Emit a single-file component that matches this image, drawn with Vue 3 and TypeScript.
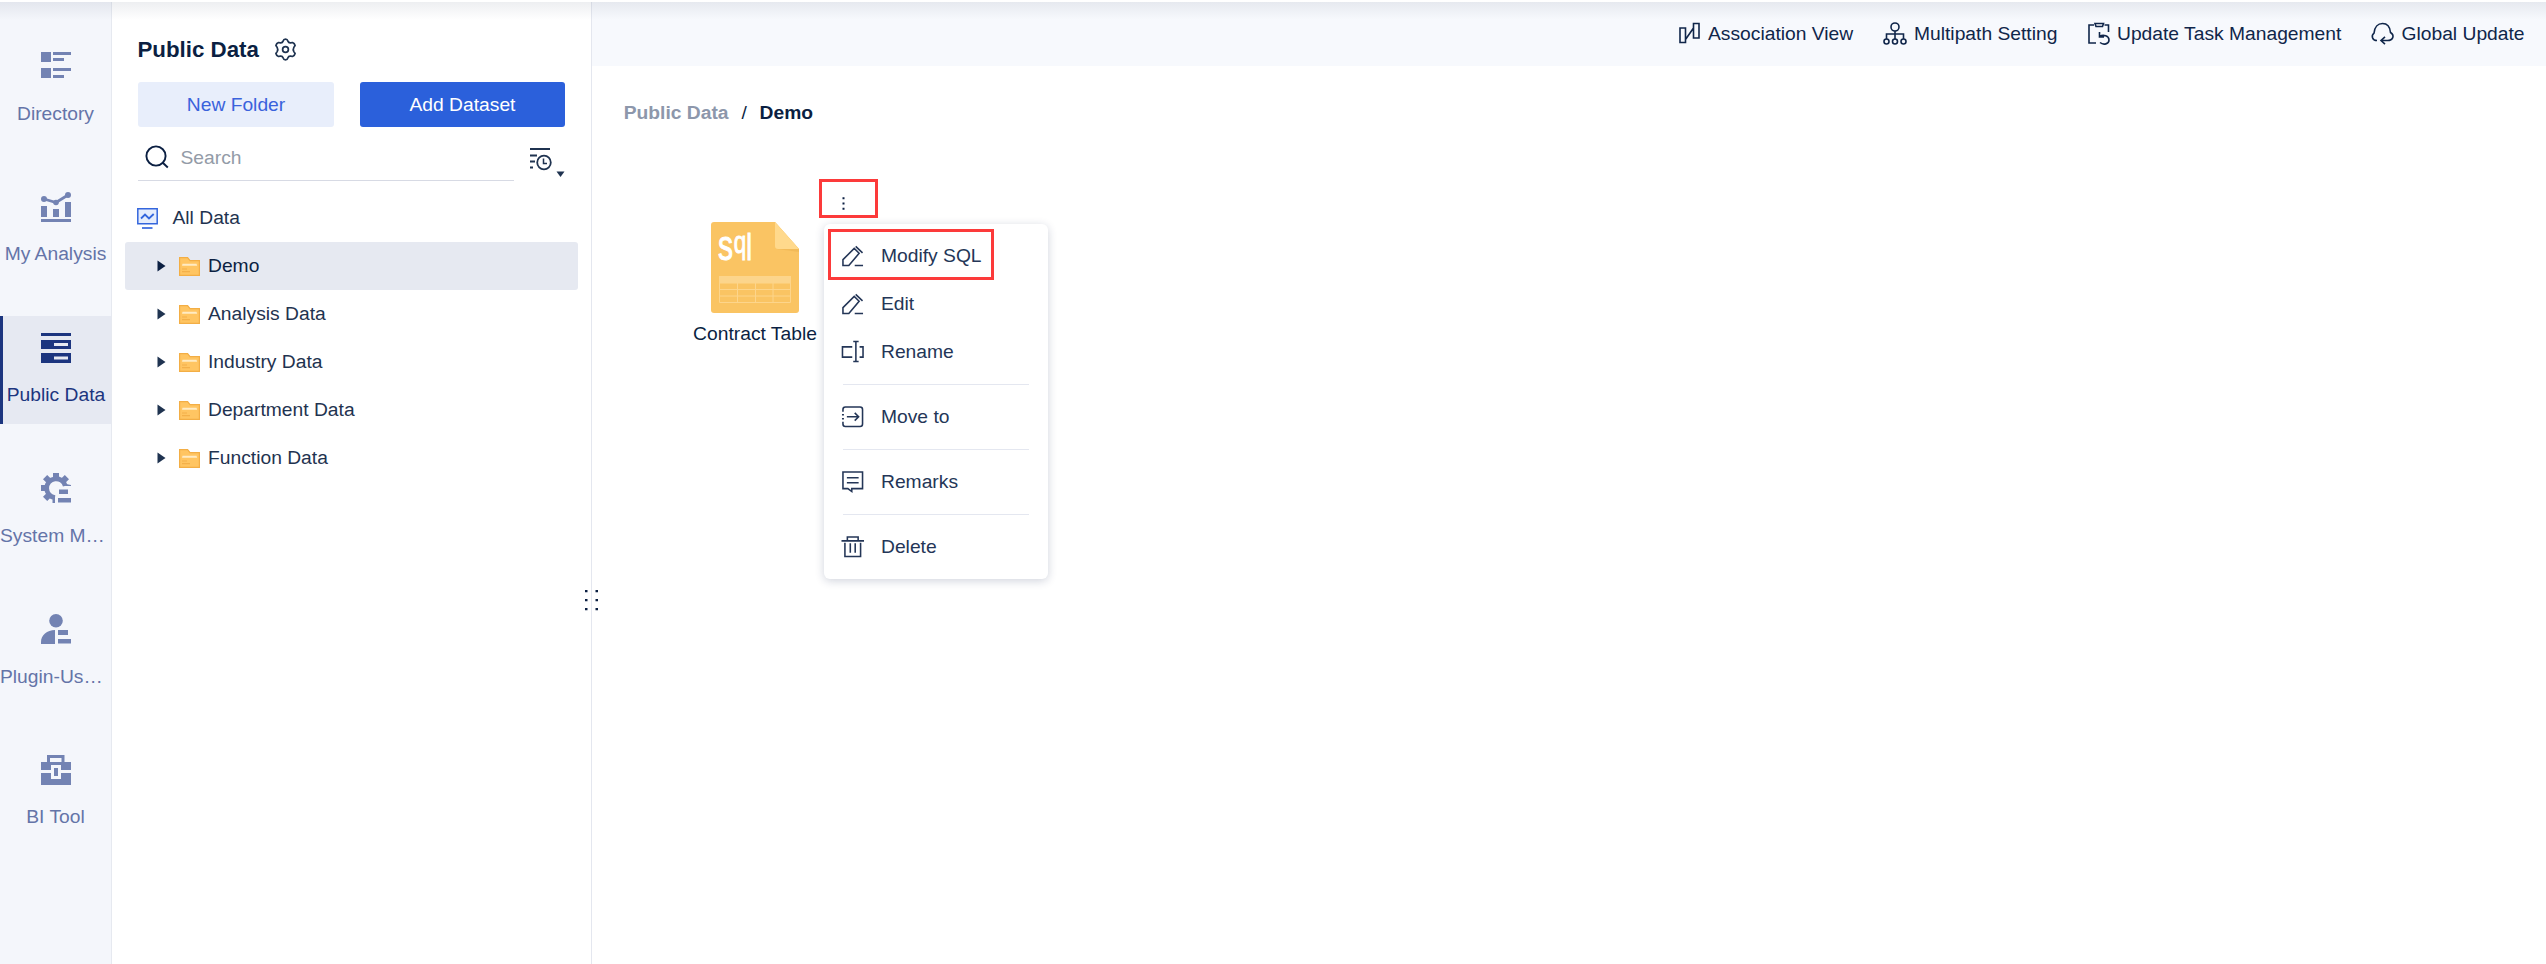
<script setup lang="ts">
import { ref } from 'vue'

interface NavItem { id: string; label: string; clipped?: boolean }
interface MenuEntry { icon: string; label: string; divided?: boolean }

const navItems: NavItem[] = [
  { id: 'directory', label: 'Directory' },
  { id: 'analysis', label: 'My Analysis' },
  { id: 'public', label: 'Public Data' },
  { id: 'system', label: 'System M…', clipped: true },
  { id: 'plugin', label: 'Plugin-Us…', clipped: true },
  { id: 'tool', label: 'BI Tool' },
]
const activeNav = ref('public')

const folders: string[] = ['Demo', 'Analysis Data', 'Industry Data', 'Department Data', 'Function Data']
const activeFolder = ref('Demo')

const actions = [
  { icon: 'association', label: 'Association View' },
  { icon: 'multipath', label: 'Multipath Setting' },
  { icon: 'task', label: 'Update Task Management' },
  { icon: 'global', label: 'Global Update' },
]

const menu: MenuEntry[] = [
  { icon: 'edit', label: 'Modify SQL' },
  { icon: 'edit', label: 'Edit' },
  { icon: 'rename', label: 'Rename' },
  { icon: 'move', label: 'Move to', divided: true },
  { icon: 'remarks', label: 'Remarks', divided: true },
  { icon: 'delete', label: 'Delete', divided: true },
]
</script>

<template>
  <div class="app">
    <nav class="rail">
      <div
        v-for="item in navItems"
        :key="item.id"
        class="rail-item"
        :class="{ active: item.id === activeNav }"
        @click="activeNav = item.id"
      >
        <svg class="rail-icon" viewBox="0 0 30 30" fill="currentColor">
          <template v-if="item.id === 'directory'">
            <path d="M0 1h10v10H0zM12 1h18v3H12zM12 7h11v3H12zM0 17h10v10H0zM12 17h18v3H12zM12 24h11v3H12z" />
          </template>
          <template v-else-if="item.id === 'analysis'">
            <path d="M0 14h6v11H0zM12 17h6v8h-6zM24 10h6v15h-6zM0 27h30v3H0z" />
            <path d="M3 7l12 3.500L27 3" fill="none" stroke="currentColor" stroke-width="2.800" />
            <circle cx="3" cy="7" r="3" /><circle cx="15" cy="10.500" r="2.800" /><circle cx="27" cy="3" r="3" />
          </template>
          <template v-else-if="item.id === 'public'">
            <path fill-rule="evenodd" d="M0 0h30v3H0zM0 7h30v9H0zM13 10v3h14v-3zM0 20h30v10H0zM13 23.500v3h14v-3z" />
          </template>
          <template v-else-if="item.id === 'system'">
            <path d="M24.300 12.800A9.500 9.500 0 1 0 14 24.700" fill="none" stroke="currentColor" stroke-width="4.800" />
            <path d="M12 0h6v5h-6zM0 12h5v6H0zM2 6.200L6.200 2 9.500 5.300 5.300 9.500zM28 6.200L23.800 2l-3.300 3.300 4.200 4.200zM2 23.800L6.200 28l3.300-3.300-4.200-4.200zM11.500 25H14v5h-2.500zM25 11l5 1v1h-6z" />
            <path d="M18 16.500h9v4.500h-9zM17 25h13v4.500H17z" />
          </template>
          <template v-else-if="item.id === 'plugin'">
            <circle cx="15" cy="6.800" r="6.800" />
            <path d="M14 16v14H0v-2C0 21 6 16 14 16zM17 16h10v5H17zM17 25h13v4.500H17z" />
          </template>
          <template v-else>
            <path fill-rule="evenodd" d="M6 0h17.500v7H30v8H20v-5H10v5H0V7h6zM9 3v4h11.500V3z" />
            <path d="M13 13h4v8h-4zM0 18h10v6h10v-6h10v12H0z" />
          </template>
        </svg>
        <span class="rail-label" :class="{ clipped: item.clipped }">{{ item.label }}</span>
      </div>
    </nav>

    <aside class="panel">
      <header class="panel-head">
        <h1>Public Data</h1>
        <svg class="gear" viewBox="0 0 24 24" fill="none" stroke="currentColor" stroke-width="1.800" stroke-linejoin="round">
          <path d="M9.500 3.300Q10 1.200 12 1.200T14.500 3.300Q15.300 5.400 17.500 5L19.300 4.700Q21.500 5.500 22 7.800L20.700 9.800Q19.500 12 20.700 14.200L22 16.200Q21.500 18.500 19.300 19.300L17.500 19Q15.300 18.600 14.500 20.700 14 22.800 12 22.800T9.500 20.700Q8.700 18.600 6.500 19L4.700 19.300Q2.500 18.500 2 16.200L3.300 14.200Q4.500 12 3.300 9.800L2 7.800Q2.500 5.500 4.700 4.700L6.500 5Q8.700 5.400 9.500 3.300z" />
          <circle cx="12" cy="12" r="3" />
        </svg>
      </header>
      <div class="buttons">
        <button class="btn soft">New Folder</button>
        <button class="btn solid">Add Dataset</button>
      </div>
      <div class="search-row">
        <label class="search">
          <svg viewBox="0 0 24 24" fill="none" stroke="currentColor" stroke-width="1.900">
            <circle cx="11" cy="11" r="9.600" /><path d="M17.500 17.500l5.300 5" />
          </svg>
          <span>Search</span>
        </label>
        <svg class="sort" viewBox="0 0 36 30" fill="none" stroke="currentColor" stroke-width="1.800">
          <path d="M1 1h20M1 7.500h7M1 13.500h5M1 19.500h3" />
          <circle cx="15" cy="14.500" r="6.800" /><path d="M14.500 10.500v5h3.500" stroke-width="1.500" />
          <path d="M27.500 23.500h8l-4 5.500z" fill="currentColor" stroke="none" />
        </svg>
      </div>

      <div class="tree">
        <div class="row root">
          <svg class="monitor" viewBox="0 0 21 21" fill="none" stroke="#3466dd">
            <path d="M.8.800h19.400v15H.8z" fill="#e6edfc" stroke-width="1.500" />
            <path d="M4 10.500l4-4 4 4 4.700-4.500" stroke-width="1.800" /><path d="M5 20h10.500" stroke-width="1.700" />
          </svg>
          <span>All Data</span>
        </div>
        <div
          v-for="folder in folders"
          :key="folder"
          class="row"
          :class="{ selected: folder === activeFolder }"
          @click="activeFolder = folder"
        >
          <svg class="caret" viewBox="0 0 9 12" fill="currentColor"><path d="M.5.500L8.500 6 .5 11.500z" /></svg>
          <svg class="folder" viewBox="0 0 21 19">
            <path d="M.6.600h8L11 3.600h9.400v14.800H.6z" fill="#ffc562" stroke="#f3ae45" stroke-width="1.200" />
            <path d="M3.500 6.800h14l.7 1.900H3z" fill="#ffebc4" />
            <path d="M3 12h5M3 14.700h8" stroke="#f3b04a" stroke-width="1.200" />
          </svg>
          <span>{{ folder }}</span>
        </div>
      </div>
    </aside>

    <main class="main">
      <div class="toolbar">
        <div v-for="a in actions" :key="a.icon" class="action">
          <svg viewBox="0 0 24 24" fill="none" stroke="currentColor" stroke-width="1.600">
            <template v-if="a.icon === 'association'">
              <path d="M1 6h5.500v14.500H1zM14.500 1.500H20v14.500h-5.500zM6.500 17.500l8-11.500" />
            </template>
            <template v-else-if="a.icon === 'multipath'">
              <circle cx="12" cy="5" r="4" /><circle cx="3.500" cy="19.500" r="2.500" /><circle cx="12" cy="19.500" r="2.500" /><circle cx="20.500" cy="19.500" r="2.500" />
              <path d="M12 9v8M3.500 17v-5h17v5" />
            </template>
            <template v-else-if="a.icon === 'task'">
              <path d="M6 3H1v18h7M16.500 3h4v7" /><path d="M7 1.500h8.500l-1 3H8z" />
              <path d="M11.500 14.500c4-2.500 9.500-.5 9.500 3.500 0 4-5.500 5.500-9 2.500M11.500 10v5h4.500" />
            </template>
            <template v-else>
              <path d="M6 18.500C1 18.500 0 13.500 3 11.200 3.500 5 7 1.500 11.500 1.500S19 5 19.500 10.500c4.500 3 2.500 8-3 8h-6M14 14.800L10 18.500l4 3.700" />
            </template>
          </svg>
          <span>{{ a.label }}</span>
        </div>
      </div>

      <div class="crumbs">
        <b class="crumb-parent">Public Data</b><span class="slash">/</span><b>Demo</b>
      </div>

      <div class="file">
        <svg class="file-icon" viewBox="0 0 88 91">
          <path d="M3 0h61l24 27v61q0 3-3 3H3q-3 0-3-3V3q0-3 3-3z" fill="#fac463" />
          <path d="M64 0l24 27v3L66 27z" fill="#edb452" opacity=".6" />
          <path d="M64 0l24 27H67q-3 0-3-3z" fill="#ffd98c" />
          <path d="M8 54h72v7H8z" fill="#fcd58c" />
          <path d="M8.500 54.500h71v26h-71zM8 61h72M8 67.500h72M8 74h72M26.500 54v27M44.500 54v27M62 54v27" fill="none" stroke="#fdd58b" stroke-width="1" />
          <text class="file-type" transform="translate(7 38) scale(.7 1)"><tspan class="s">s</tspan><tspan class="q" dx="1" dy="-7">q</tspan><tspan class="l" dx="0" dy="7">l</tspan></text>
        </svg>
        <span>Contract Table</span>
      </div>

      <div class="more">
        <svg viewBox="0 0 3 13" fill="currentColor"><path d="M.5.300h2v2h-2zM.5 5.500h2v2h-2zM.5 10.700h2v2h-2z" /></svg>
      </div>

      <div class="menu">
        <template v-for="m in menu" :key="m.label">
          <div v-if="m.divided" class="divider"></div>
          <div class="menu-item">
            <svg viewBox="0 0 24 24" fill="none" stroke="currentColor" stroke-width="1.600">
              <template v-if="m.icon === 'edit'">
                <path d="M2 22v-6L13.500 4.500l5 5L8 22zM15 2.500l7 6.500M14 22h8.500" />
              </template>
              <template v-else-if="m.icon === 'rename'">
                <path d="M11.500 7H1.500v10.500h10M19 7h3.500v10.500H19M12.500 1.500H18M12.500 22H18M15.200 1.500V22" />
              </template>
              <template v-else-if="m.icon === 'move'">
                <path d="M2 7V4.500Q2 2 4.500 2h15Q22 2 22 4.500v15q0 2.500-2.500 2.500h-15Q2 22 2 19.500V17M1 10h2M1 14h2M6 12h12M14 8l4 4-4 4" />
              </template>
              <template v-else-if="m.icon === 'remarks'">
                <path d="M2 2h20v17H11v3l-4-3H2zM6 8h12M6 13h12" />
              </template>
              <template v-else>
                <path d="M.5 6h23M6.500 6V2h11v4M4 8v14h16V8M9.500 8.500V18M14.500 8.500V18" />
              </template>
            </svg>
            <span>{{ m.label }}</span>
          </div>
        </template>
      </div>

      <div class="mark mark-more"></div>
      <div class="mark mark-sql"></div>
    </main>

    <svg class="grip" viewBox="0 0 14 22" fill="currentColor">
      <path d="M0 0h2.500v2.200H0zM10.500 0H13v2.200h-2.500zM0 9h2.500v2.200H0zM10.500 9H13v2.200h-2.500zM0 18h2.500v2.200H0zM10.500 18H13v2.200h-2.500z" />
    </svg>
    <div class="top-shade"></div>
  </div>
</template>

<style>
body {
  margin: 0;
}
</style>

<style scoped>
.app {
  position: relative;
  display: flex;
  box-sizing: border-box;
  width: 100vw;
  height: 100vh;
  padding-top: 2px;
  overflow: hidden;
  background: #fff;
  color: #1f3350;
  font-family: "Liberation Sans", Arial, sans-serif;
  font-size: 19.25px;
  line-height: 24px;
  white-space: nowrap;
}
svg {
  display: block;
  flex: none;
  overflow: visible;
}
.rail {
  display: flex;
  flex-direction: column;
  gap: 32.75px;
  flex: none;
  box-sizing: border-box;
  width: 112px;
  padding-top: 32.500px;
  background: #f4f6fb;
  border-right: 1px solid #e6e9f0;
  color: #7383b3;
}
.rail-item {
  display: flex;
  flex-direction: column;
  align-items: center;
  gap: 20.500px;
  box-sizing: border-box;
  height: 108px;
  padding-top: 16.500px;
}
.rail-item.active {
  background: #e6e9f2;
  box-shadow: inset 3px 0 #1c357f;
  color: #1c357f;
}
.rail-icon {
  width: 30px;
  height: 30px;
}
.rail-label {
  color: #6474a8;
}
.active .rail-label {
  padding-left: 1px;
  color: #1c357f;
}
.rail-label.clipped {
  align-self: flex-start;
}
.panel {
  flex: none;
  box-sizing: border-box;
  width: 480px;
  border-right: 1px solid #e4e7ef;
}
.panel-head {
  display: flex;
  align-items: center;
  gap: 15px;
  height: 80px;
  padding: 15px 0 0 25.500px;
  box-sizing: border-box;
  color: #0b1f42;
}
.panel-head h1 {
  margin: 0;
  font-size: 22.300px;
  line-height: 30px;
}
.gear {
  width: 23px;
  height: 23px;
  color: #1f3350;
}
.buttons {
  display: grid;
  grid-template-columns: 196px 205px;
  gap: 26px;
  padding-left: 26px;
}
.btn {
  height: 45px;
  padding: 0;
  border: 0;
  border-radius: 3px;
  font: inherit;
}
.btn.soft {
  background: #e8eefb;
  color: #3a62dc;
}
.btn.solid {
  background: #2b60db;
  color: #fff;
}
.search-row {
  display: flex;
  height: 67px;
  padding-left: 26px;
}
.search {
  display: flex;
  align-items: center;
  gap: 12px;
  box-sizing: border-box;
  width: 376px;
  height: 54px;
  padding: 7px 0 0 6.500px;
  border-bottom: 1px solid #d7dae4;
  color: #939ba7;
}
.search svg {
  width: 24px;
  height: 24px;
  color: #0b1f42;
}
.search span {
  padding-top: 1px;
}
.sort {
  width: 36px;
  height: 30px;
  margin: 21px 0 0 15px;
}
.row {
  display: flex;
  align-items: center;
  height: 48px;
  margin: 0 13px;
  padding-left: 32px;
  box-sizing: border-box;
  border-radius: 3px;
}
.row.root {
  padding-left: 12px;
}
.row.selected {
  background: #e6e9f1;
  color: #0b1f42;
}
.row span {
  padding-bottom: 1px;
}
.monitor {
  width: 21px;
  height: 21px;
  margin-right: 14.500px;
}
.caret {
  width: 9px;
  height: 12px;
  margin-right: 13px;
}
.folder {
  width: 21px;
  height: 19px;
  margin-right: 8px;
}
.main {
  position: relative;
  flex: 1;
  min-width: 0;
}
.toolbar {
  display: grid;
  grid-template-columns: 204px 205px 282.500px 175.500px;
  justify-content: end;
  align-items: center;
  height: 64px;
  background: #f7f9fd;
  color: #10264a;
}
.action {
  display: flex;
  align-items: center;
  gap: 5px;
}
.action:nth-child(even) {
  gap: 7px;
}
.action svg {
  width: 24px;
  height: 24px;
}
.crumbs {
  display: flex;
  padding: 35px 0 0 31.700px;
  color: #0b1f42;
}
.crumb-parent {
  color: #8d97ab;
}
.slash {
  width: 18px;
  padding-left: 13px;
}
.file {
  display: flex;
  flex-direction: column;
  align-items: center;
  gap: 9px;
  width: 124px;
  margin: 97px 0 0 101px;
  color: #0b1f42;
}
.file-icon {
  width: 88px;
  height: 91px;
}
.file-type {
  fill: #fff;
  stroke: #fff;
  stroke-width: 1px;
}
.file-type .s {
  font-size: 43px;
}
.file-type .q {
  font-size: 32px;
}
.file-type .l {
  font-size: 37px;
}
.more {
  position: absolute;
  left: 250px;
  top: 195px;
  width: 3px;
  height: 13px;
  color: #0b1f42;
}
.menu {
  position: absolute;
  left: 232px;
  top: 222px;
  box-sizing: border-box;
  width: 224px;
  height: 355px;
  padding: 7px 19px 9px;
  border-radius: 6px;
  background: #fff;
  box-shadow: 0 2px 10px rgba(20, 35, 80, .2);
  color: #243657;
}
.menu-item {
  display: flex;
  align-items: center;
  gap: 16.500px;
  height: 48px;
  margin-left: -2px;
  padding-top: 1px;
  box-sizing: border-box;
}
.menu-item span {
  padding-top: 1px;
}
.menu-item svg {
  width: 23.500px;
  height: 23.500px;
}
.divider {
  height: 1px;
  margin: 9px 0 7px;
  background: #e4e7f0;
}
.mark {
  position: absolute;
  box-sizing: border-box;
  border: 3px solid #fc3a3a;
}
.mark-more {
  left: 227px;
  top: 177px;
  width: 59px;
  height: 39px;
}
.mark-sql {
  left: 236px;
  top: 227px;
  width: 166px;
  height: 51px;
}
.grip {
  position: absolute;
  left: 585px;
  top: 590px;
  width: 14px;
  height: 22px;
  color: #0b1f42;
}
.top-shade {
  position: absolute;
  inset: 2px 0 auto;
  height: 18px;
  background: linear-gradient(rgba(30, 45, 80, .08), rgba(30, 45, 80, 0));
  pointer-events: none;
}
</style>
